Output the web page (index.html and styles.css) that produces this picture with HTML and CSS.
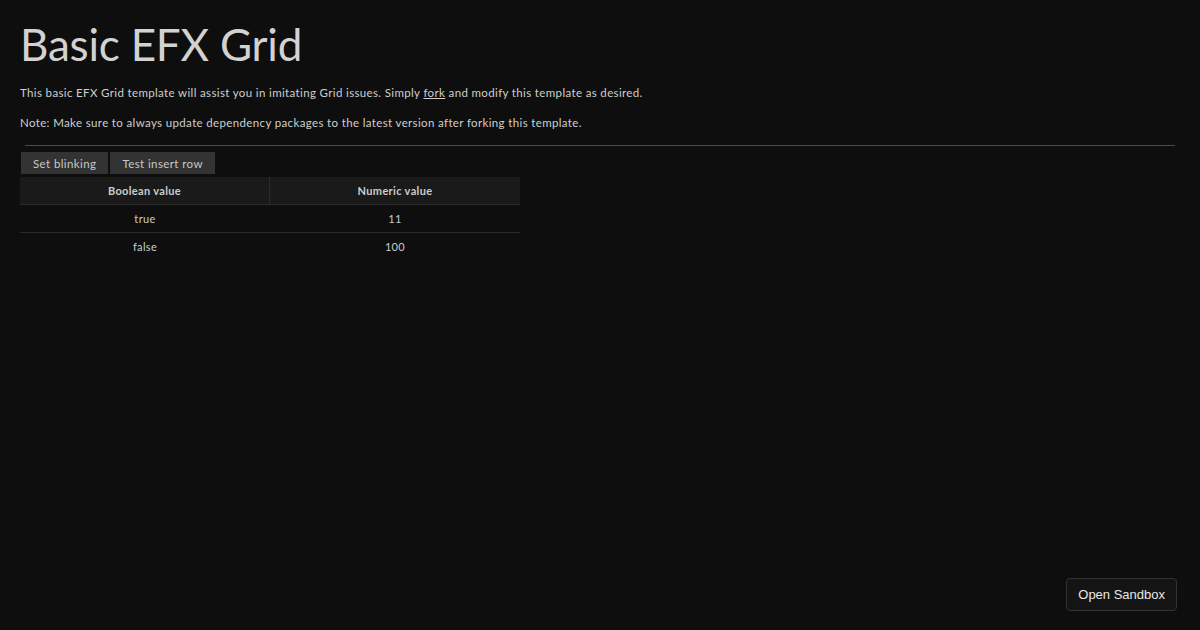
FILE: index.html
```html
<!DOCTYPE html>
<html>
<head>
<meta charset="utf-8">
<link rel="stylesheet" href="styles.css">
</head>
<body>
<div class="page">
  <h1 class="title">Basic EFX Grid</h1>
  <p class="text">This basic EFX Grid template will assist you in imitating Grid issues. Simply <a class="link" href="#">fork</a> and modify this template as desired.</p>
  <p class="text">Note: Make sure to always update dependency packages to the latest version after forking this template.</p>
  <hr class="rule">
  <div class="toolbar">
    <button class="btn">Set blinking</button>
    <button class="btn">Test insert row</button>
  </div>
  <div class="grid">
    <div class="row head">
      <div class="cell">Boolean value</div>
      <div class="cell">Numeric value</div>
    </div>
    <div class="row">
      <div class="cell">true</div>
      <div class="cell">11</div>
    </div>
    <div class="row">
      <div class="cell">false</div>
      <div class="cell">100</div>
    </div>
  </div>
</div>
<button class="sandbox">Open Sandbox</button>
</body>
</html>
```

FILE: styles.css
```css
html, body {
  margin: 0;
  padding: 0;
  background: #0e0e0e;
  height: 100%;
}
body {
  font-family: "Lato", "Open Sans", sans-serif;
  color: #cfcfcf;
}
.page {
  padding: 18px 20px 0 20px;
}
.title {
  margin: 0;
  font-weight: 400;
  font-size: 44px;
  line-height: 52px;
  color: #d2d2d2;
  letter-spacing: -0.2px;
}
.text {
  margin: 0;
  font-size: 11.5px;
  line-height: 30px;
  color: #cfcfcf;
  letter-spacing: 0.36px;
}
.text:first-of-type {
  margin-top: 8px;
}
.link {
  color: #cfcfcf;
  text-decoration: underline;
}
.rule {
  border: 0;
  border-top: 1px solid #4a4a4a;
  margin: 7px 5px 6px 5px;
  height: 0;
}
.toolbar {
  display: flex;
  gap: 2px;
  padding-left: 1px;
}
.btn {
  font-family: inherit;
  font-size: 11.5px;
  letter-spacing: 0.4px;
  color: #c8c8c8;
  background: #333333;
  border: 0;
  height: 22px;
  padding: 0 12px;
  margin: 0;
}
.grid {
  width: 500px;
  margin-top: 3px;
  font-size: 11px;
  letter-spacing: 0.35px;
}
.row {
  display: grid;
  grid-template-columns: 250px 250px;
  height: 27px;
  border-bottom: 1px solid #2a2a2a;
}
.row:last-child {
  border-bottom: 0;
}
.row.head {
  background: #1a1a1a;
  font-weight: 700;
  height: 27px;
  border-bottom: 1px solid #2c2c2c;
}
.row.head .cell:first-child {
  border-right: 1px solid #2c2c2c;
}
.cell {
  display: flex;
  align-items: center;
  justify-content: center;
  color: #cccccc;
}
.sandbox {
  position: fixed;
  right: 23px;
  bottom: 19px;
  height: 33px;
  padding: 0 11px;
  background: #141414;
  border: 1px solid #333;
  border-radius: 4px;
  color: #e8e8e8;
  font-family: "Liberation Sans", Arial, sans-serif;
  font-size: 13px;
}
```
